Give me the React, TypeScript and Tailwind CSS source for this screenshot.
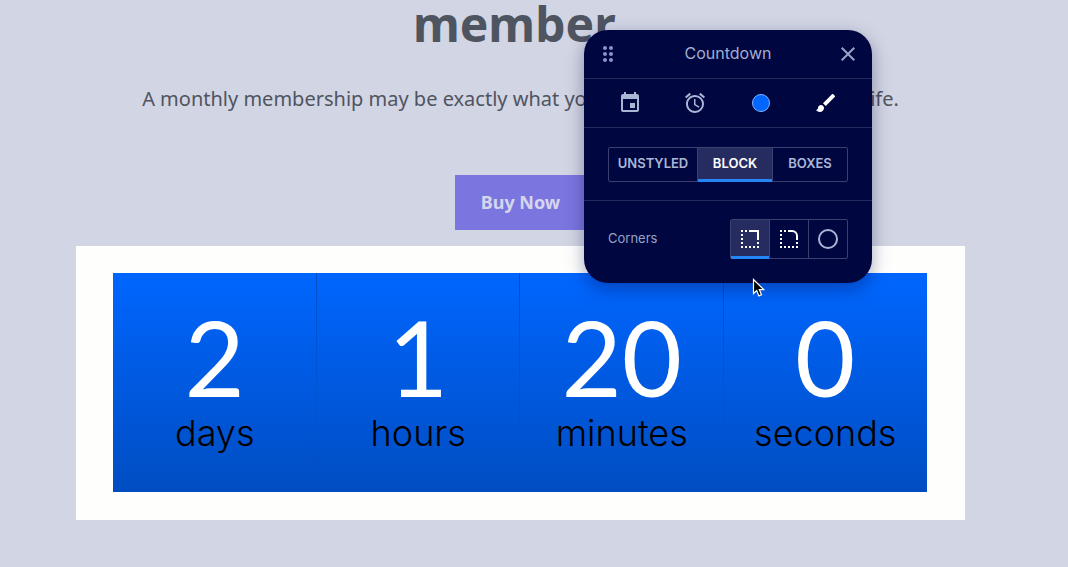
import { useState } from 'react'
import clsx from 'clsx'
import { MdAlarm, MdBrush, MdClose, MdDragIndicator, MdEvent } from 'react-icons/md'

const UNITS = [
  { value: 2, label: 'days' },
  { value: 1, label: 'hours' },
  { value: 20, label: 'minutes' },
  { value: 0, label: 'seconds' },
]

const LAYOUTS = [
  { name: 'Unstyled', width: 'w-[88px]' },
  { name: 'Block', width: 'w-[75px]' },
  { name: 'Boxes', width: 'flex-1' },
]

// Dots on the sides that are not part of the highlighted corner
const DOTS = [
  [0, 0], [4, 0],
  [0, 4], [0, 8], [0, 12],
  [0, 16], [4, 16], [8, 16], [12, 16], [16, 16],
  [16, 12],
]

function CornerIcon({ path }: { path: string }) {
  return (
    <svg width="18" height="18" viewBox="0 0 18 18" aria-hidden="true">
      {DOTS.map(([x, y]) => (
        <rect key={`${x}-${y}`} x={x} y={y} width="2" height="2" fill="white" />
      ))}
      <path d={path} fill="none" stroke="white" strokeWidth="2" />
    </svg>
  )
}

const CORNERS = [
  { name: 'Square', width: 'w-[38px]', icon: <CornerIcon path="M8 1h9v9" /> },
  { name: 'Rounded', width: 'w-[39px]', icon: <CornerIcon path="M8 1h4a5 5 0 0 1 5 5v4" /> },
  {
    name: 'Circle',
    width: 'w-[39px]',
    icon: (
      <svg width="20" height="20" viewBox="0 0 20 20" aria-hidden="true">
        <circle cx="10" cy="10" r="9" fill="none" stroke="#aab6d6" strokeWidth="2" />
      </svg>
    ),
  },
]

function Countdown() {
  return (
    <div className="bg-[#fefffd] pt-[27px] pr-[38px] pb-7 pl-[37px]">
      <div className="grid grid-cols-4 bg-linear-to-b from-[#0066ff] to-[#004dc2]">
        {UNITS.map(({ value, label }, i) => (
          <div key={label} className="relative flex flex-col items-center py-[33px]">
            {i < UNITS.length - 1 && (
              <span className="absolute inset-y-0 right-0 w-px bg-linear-to-b from-[#004dc2] to-[#004dc2]/0" />
            )}
            <span className="font-['Lato',sans-serif] text-[104px] leading-[102px] text-white">{value}</span>
            <span className="font-['Inter',sans-serif] text-[36px] leading-[51px] font-light text-black">
              {label}
            </span>
          </div>
        ))}
      </div>
    </div>
  )
}

function CountdownPanel() {
  const [layout, setLayout] = useState('Block')
  const [corner, setCorner] = useState('Square')

  return (
    <section
      aria-label="Countdown settings"
      className="absolute top-[30px] left-[584px] w-72 rounded-3xl bg-[#00063f] font-['Inter',sans-serif] text-[#aab6d6] shadow-[0_6px_18px_rgba(0,6,63,0.35)]"
    >
      <header className="flex h-[49px] items-center justify-between border-b border-[#232a5c] px-3">
        <button aria-label="Move" className="text-[#8b93cb]">
          <MdDragIndicator size={24} />
        </button>
        <h2 className="pb-0.5 text-base text-[#a3add0]">Countdown</h2>
        <button aria-label="Close" className="text-[#98a3c8]">
          <MdClose size={24} />
        </button>
      </header>

      <div className="flex h-[49px] items-center justify-between border-b border-[#232a5c] px-[34px]">
        <button aria-label="Date">
          <MdEvent size={24} />
        </button>
        <button aria-label="Alarm">
          <MdAlarm size={24} />
        </button>
        <button aria-label="Color" className="flex size-6 items-center justify-center">
          <span className="size-[18px] rounded-full border border-[#7fb2ff] bg-[#0066ff]" />
        </button>
        <button aria-label="Style" className="text-white">
          <MdBrush size={24} />
        </button>
      </div>

      <div className="border-b border-[#232a5c] px-6 pt-[19px] pb-[18px]">
        <div className="flex h-[35px] rounded-xs border border-[#3a4170]">
          {LAYOUTS.map(({ name, width }, i) => (
            <button
              key={name}
              onClick={() => setLayout(name)}
              className={clsx(
                'relative pb-0.5 text-[13px] font-semibold uppercase',
                width,
                i > 0 && 'border-l border-[#3a4170]',
                layout === name && 'bg-[#272c60] text-white',
              )}
            >
              {name}
              {layout === name && <span className="absolute inset-x-0 -bottom-px h-[3px] bg-[#2486f5]" />}
            </button>
          ))}
        </div>
      </div>

      <div className="flex items-center justify-between px-6 pt-[18px] pb-6">
        <span className="text-[13px] text-[#98a3c8]">Corners</span>
        <div className="flex h-10 rounded-xs border border-[#3a4170]">
          {CORNERS.map(({ name, width, icon }, i) => (
            <button
              key={name}
              aria-label={name}
              onClick={() => setCorner(name)}
              className={clsx(
                'relative flex items-center justify-center',
                width,
                i > 0 && 'border-l border-[#3a4170]',
                corner === name && 'bg-[#272c60]',
              )}
            >
              {icon}
              {corner === name && <span className="absolute inset-x-0 -bottom-px h-[3px] bg-[#2486f5]" />}
            </button>
          ))}
        </div>
      </div>
    </section>
  )
}

function Cursor() {
  return (
    <svg
      className="pointer-events-none absolute top-[278px] left-[752px]"
      width="13"
      height="20"
      viewBox="0 0 13 20"
      aria-hidden="true"
    >
      <path
        d="M1.5 1.5v14l3.2-3 2.2 5.4 2.6-1.1-2.2-5.2h4.4z"
        fill="black"
        stroke="white"
        strokeWidth="1.2"
      />
    </svg>
  )
}

export default function App() {
  return (
    <div className="relative min-h-screen overflow-hidden bg-[#d2d5e3] font-['Noto_Sans',sans-serif] text-[#4f5461]">
      <main className="pr-[103px] pl-[76px]">
        <div className="flex flex-col items-center pb-4 text-center">
          <h1 className="text-5xl leading-[48px] font-bold">member&nbsp;</h1>
          <p className="mt-[38px] text-xl leading-[26px]">
            A monthly membership may be exactly what you need to finally change your life.
          </p>
          <a
            href="#buy"
            className="mt-[63px] bg-[#7b76df] px-[26px] py-[14px] text-lg leading-[27px] font-bold text-[#d5d6ee]"
          >
            Buy Now
          </a>
        </div>
        <Countdown />
      </main>
      <CountdownPanel />
      <Cursor />
    </div>
  )
}
